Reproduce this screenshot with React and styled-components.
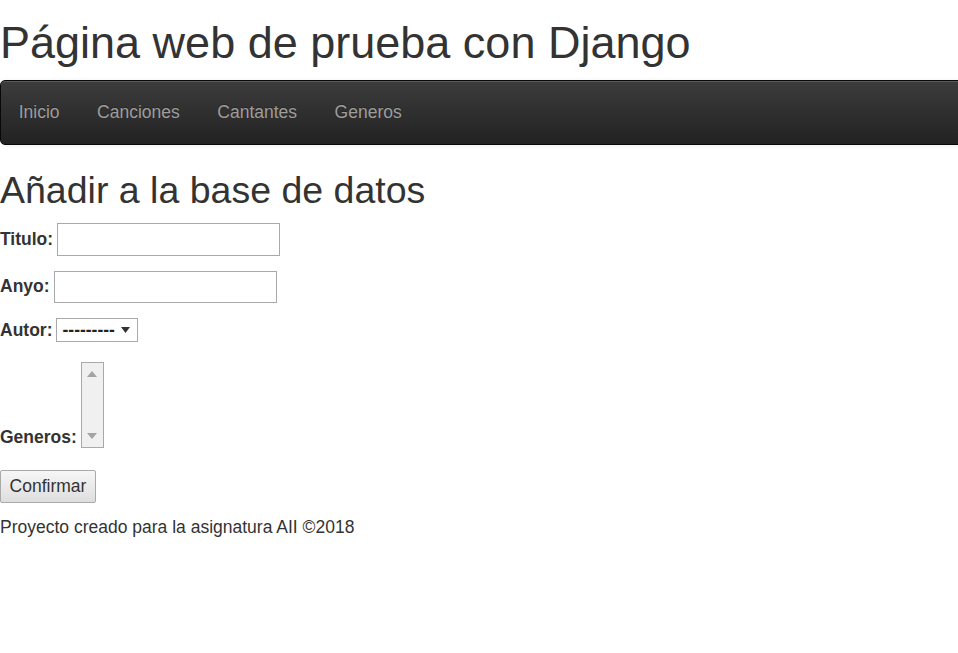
import React from "react";
import styled, { createGlobalStyle } from "styled-components";

const GlobalStyle = createGlobalStyle`
  html, body {
    margin: 0;
    padding: 0;
    overflow-x: hidden;
    background: #fff;
  }
  body {
    font-family: "Liberation Sans", Arial, Helvetica, sans-serif;
    font-size: 17.5px;
    line-height: 25px;
    color: #333;
  }
`;

const Title = styled.h1`
  font-size: 45px;
  font-weight: 500;
  line-height: 49.5px;
  margin: 18px 0 12.5px;
`;

const Navbar = styled.nav`
  height: 63px;
  margin: 0 -20px 25px 0;
  border: 1px solid #080808;
  border-radius: 5px;
  background: linear-gradient(to bottom, #3c3c3c 0, #222 100%);
  box-shadow: inset 0 1px 0 rgba(255, 255, 255, 0.15),
    0 1px 5px rgba(0, 0, 0, 0.075);
`;

const NavList = styled.ul`
  display: flex;
  list-style: none;
  margin: 0 0 0 -1px;
  padding: 0;
`;

const NavLink = styled.a`
  display: block;
  padding: 18.75px 18.75px;
  line-height: 25px;
  color: #9d9d9d;
  text-decoration: none;
  text-shadow: 0 -1px 0 rgba(0, 0, 0, 0.25);
`;

const Subtitle = styled.h2`
  font-size: 37.5px;
  font-weight: 500;
  line-height: 41.25px;
  margin: 0 0 11.5px;
`;

const Row = styled.p`
  display: flex;
  align-items: ${p => (p.$bottom ? "flex-end" : "center")};
  gap: 4px;
  margin: 0 0 ${p => p.$space || 15}px;
`;

const Label = styled.label`
  font-weight: bold;
  line-height: 25px;
  margin-bottom: ${p => (p.$bottom ? "-2px" : "0")};
`;

const TextInput = styled.input`
  box-sizing: border-box;
  width: 223px;
  height: ${p => p.$h || 33}px;
  margin: 0;
  padding: 1px 3px;
  border: 1px solid #a9a9a9;
  font: inherit;
  background: #fff;
`;

const arrow =
  "data:image/svg+xml;utf8,<svg xmlns='http://www.w3.org/2000/svg' width='9' height='6'><path d='M0 0h9L4.5 6z' fill='%23333'/></svg>";

const Select = styled.select`
  box-sizing: border-box;
  width: 82px;
  height: 24px;
  margin: 0;
  padding: 0 0 0 5px;
  border: 1px solid #a9a9a9;
  border-radius: 0;
  appearance: none;
  background: #fff url("${arrow}") no-repeat right 7px center;
  font-family: inherit;
  font-size: 17.5px;
  font-weight: bold;
  color: #222;
`;

const ListBox = styled.div`
  box-sizing: border-box;
  width: 23px;
  height: 86px;
  border: 1px solid #a9a9a9;
  background: #f0f0f0;
  display: flex;
  flex-direction: column;
  justify-content: space-between;
  align-items: center;
  padding: 8px 0;
`;

const ScrollArrow = ({ up }) => (
  <svg width="10" height="6" viewBox="0 0 10 6">
    <path d={up ? "M0 6h10L5 0z" : "M0 0h10L5 6z"} fill="#a3a3a3" />
  </svg>
);

const Button = styled.button`
  box-sizing: border-box;
  width: 96px;
  height: 33px;
  margin: 0;
  padding: 0;
  border: 1px solid #a9a9a9;
  border-radius: 2px;
  background: linear-gradient(to bottom, #f6f6f6 0, #dedede 100%);
  font-family: inherit;
  font-size: 17.5px;
  color: #333;
`;

const Footer = styled.footer`
  margin-top: 12px;
`;

const links = ["Inicio", "Canciones", "Cantantes", "Generos"];

export default function App() {
  return (
    <>
      <GlobalStyle />
      <Title>Página web de prueba con Django</Title>
      <Navbar>
        <NavList>
          {links.map(l => (
            <li key={l}>
              <NavLink href="#">{l}</NavLink>
            </li>
          ))}
        </NavList>
      </Navbar>
      <Subtitle>Añadir a la base de datos</Subtitle>
      <form onSubmit={e => e.preventDefault()}>
        <Row>
          <Label htmlFor="id_titulo">Titulo:</Label>
          <TextInput id="id_titulo" type="text" />
        </Row>
        <Row>
          <Label htmlFor="id_anyo">Anyo:</Label>
          <TextInput id="id_anyo" type="text" $h={32} />
        </Row>
        <Row $space={19}>
          <Label htmlFor="id_autor">Autor:</Label>
          <Select id="id_autor" defaultValue="">
            <option value="">---------</option>
          </Select>
        </Row>
        <Row $bottom $space={22}>
          <Label $bottom>Generos:</Label>
          <ListBox>
            <ScrollArrow up />
            <ScrollArrow />
          </ListBox>
        </Row>
        <Button type="submit">Confirmar</Button>
      </form>
      <Footer>Proyecto creado para la asignatura AII ©2018</Footer>
    </>
  );
}
